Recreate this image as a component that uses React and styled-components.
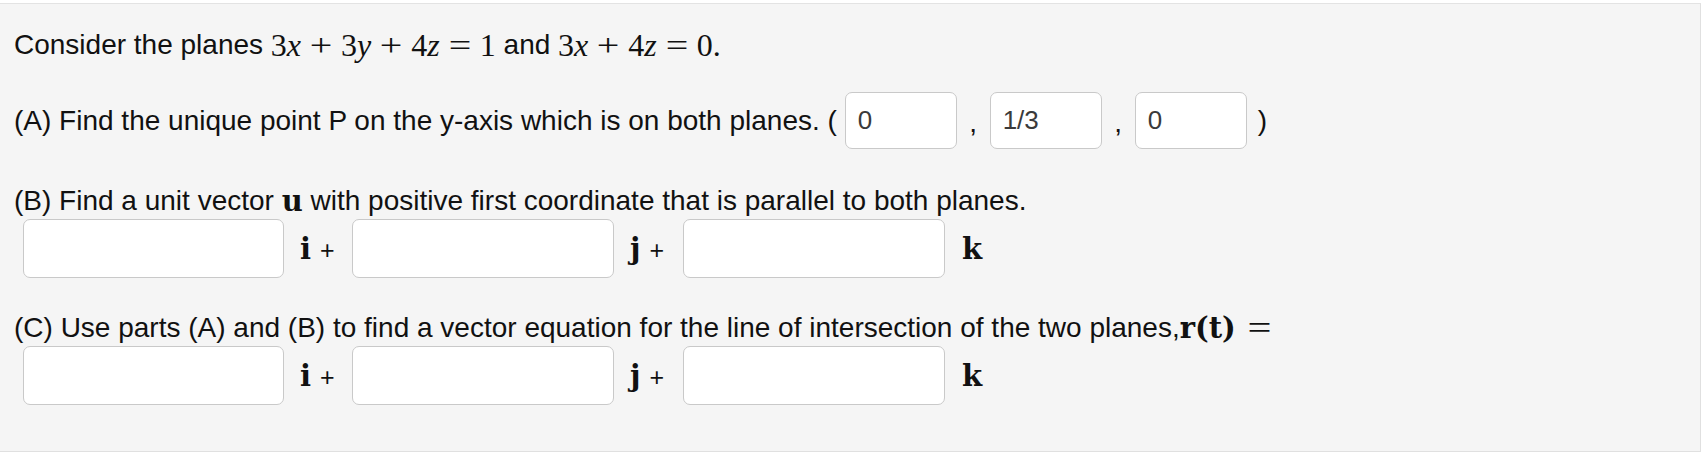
import React from 'react'
import styled, { createGlobalStyle } from 'styled-components'

const GlobalStyle = createGlobalStyle`
  body {
    margin: 0;
    background: #fff;
    font-family: "Liberation Sans", Arial, sans-serif;
  }
`

const Panel = styled.div`
  margin-top: 3px;
  width: 1701px;
  height: 449px;
  box-sizing: border-box;
  background: #f5f5f5;
  border-top: 1px solid #e3e3e3;
  border-right: 1px solid #e0e0e0;
  border-bottom: 1px solid #e0e0e0;
  padding: 23px 0 0 14px;
  font-size: 28px;
  color: #111;
`

const Line = styled.div`
  display: flex;
  align-items: center;
  height: ${props => props.$h || 36}px;
  margin-top: ${props => props.$top || 0}px;
  padding-left: ${props => props.$indent || 0}px;
  white-space: pre;
`

const Math = styled.span`
  font-family: "Liberation Serif", "DejaVu Serif", serif;
  font-size: ${props => props.$size || 32}px;
  display: inline-flex;
  align-items: baseline;
`

const Var = styled.i`
  font-style: italic;
`

const Op = styled.span`
  display: inline-block;
  margin: 0 ${props => props.$gap || 11}px;
  transform: scaleX(1.25);
`

const Bold = styled.b`
  font-family: "DejaVu Serif", "Liberation Serif", serif;
  font-weight: bold;
  font-size: 29px;
`

const Field = styled.input`
  width: ${props => props.$w}px;
  height: ${props => props.$h}px;
  flex: none;
  box-sizing: border-box;
  border: 1px solid #c9c9c9;
  border-radius: 7px;
  background: #fff;
  padding: 0 12px;
  font-family: "Liberation Sans", Arial, sans-serif;
  font-size: 26px;
  color: #3a3a3a;
  outline: none;
`

const Sep = styled.span`
  width: 33px;
  text-align: center;
  padding-top: 5px;
`

const Close = styled.span`
  margin-left: 11px;
`

const Unit = styled.span`
  width: ${props => props.$w || 68}px;
  box-sizing: border-box;
  padding-left: ${props => props.$pad || 16}px;
  display: flex;
  align-items: baseline;
`

const Plus = styled.span`
  margin-left: 9px;
  font-size: 25px;
`

const Eq = ({ children }) => <Math>{children}</Math>

const VectorRow = () => (
  <Line $h={59} $indent={9}>
    <Field $w={261} $h={59} />
    <Unit><Bold>i</Bold><Plus>+</Plus></Unit>
    <Field $w={262} $h={59} />
    <Unit $w={69}><Bold>j</Bold><Plus>+</Plus></Unit>
    <Field $w={262} $h={59} />
    <Unit $pad={17}><Bold>k</Bold></Unit>
  </Line>
)

export default function App () {
  return (
    <>
      <GlobalStyle />
      <Panel>
        <Line>
          {'Consider the planes '}
          <Eq>3<Var>x</Var><Op>+</Op>3<Var>y</Var><Op>+</Op>4<Var>z</Var><Op>=</Op>1</Eq>
          {' and '}
          <Eq>3<Var>x</Var><Op>+</Op>4<Var>z</Var><Op>=</Op>0.</Eq>
        </Line>

        <Line $h={57} $top={29}>
          {'(A) Find the unique point P on the y-axis which is on both planes. ( '}
          <Field $w={112} $h={57} defaultValue='0' />
          <Sep>,</Sep>
          <Field $w={112} $h={57} defaultValue='1/3' />
          <Sep>,</Sep>
          <Field $w={112} $h={57} defaultValue='0' />
          <Close>)</Close>
        </Line>

        <Line $top={34}>
          {'(B) Find a unit vector '}
          <Bold>u</Bold>
          {' with positive first coordinate that is parallel to both planes.'}
        </Line>
        <VectorRow />

        <Line $top={32}>
          {'(C) Use parts (A) and (B) to find a vector equation for the line of intersection of the two planes,'}
          <Bold>r(t)</Bold>
          <Math $size={34}><Op $gap={14}>=</Op></Math>
        </Line>
        <VectorRow />
      </Panel>
    </>
  )
}
